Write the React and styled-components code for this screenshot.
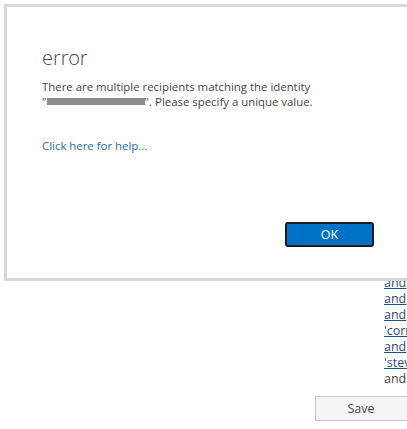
import React from 'react'
import styled, { createGlobalStyle } from 'styled-components'

const GlobalStyle = createGlobalStyle`
  html, body {
    margin: 0;
    padding: 0;
    background: #ffffff;
  }
  body {
    font-family: "Open Sans", "Noto Sans", "Liberation Sans", sans-serif;
  }
`

const Page = styled.div`
  position: relative;
  width: 407px;
  height: 429px;
  overflow: hidden;
  background: #ffffff;
`

const Behind = styled.div`
  display: flex;
  flex-direction: column;
  align-items: flex-start;
  padding: 275px 0 0 315px;
`

const LinkList = styled.ul`
  list-style: none;
  margin: 0 0 0 69px;
  padding: 0;
  font-size: 12.5px;
  line-height: 16px;
  white-space: nowrap;
`

const LinkItem = styled.li`
  color: ${(p) => (p.$plain ? '#444444' : '#1f4f7f')};
  text-decoration: ${(p) => (p.$plain ? 'none' : 'underline')};
`

const SaveButton = styled.button`
  margin-top: 9px;
  width: 102px;
  height: 25px;
  border: 1px solid #c8c8c8;
  background: #f4f4f4;
  color: #444444;
  font-family: inherit;
  font-size: 12.5px;
  padding: 0 10px 0 0;
`

const Dialog = styled.div`
  position: absolute;
  top: 4px;
  left: 4px;
  width: 430px;
  height: 277px;
  border: 3px solid #d8d8d8;
  background: #ffffff;
  display: flex;
  flex-direction: column;
  align-items: flex-start;
  padding: 38px 0 0 35px;
  box-sizing: border-box;
`

const Title = styled.h1`
  margin: 0;
  font-family: "Open Sans Light", "Lato Light", "Open Sans", sans-serif;
  font-size: 20px;
  font-weight: 300;
  line-height: 26px;
  color: #484848;
`

const Message = styled.p`
  margin: 8px 0 0;
  font-size: 11.4px;
  line-height: 15px;
  color: #444444;
`

const Redacted = styled.span`
  display: inline-block;
  width: 98px;
  height: 7px;
  background: #8c8c8c;
  vertical-align: 1px;
`

const HelpLink = styled.a`
  margin-top: 29px;
  font-size: 11.4px;
  line-height: 15px;
  color: #2a6bb0;
  text-decoration: none;
`

const Footer = styled.div`
  display: flex;
  margin-top: 69px;
  padding-left: 243px;
`

const OkButton = styled.button`
  width: 89px;
  height: 25px;
  border: 2px solid #1b1b1b;
  border-radius: 3px;
  background: #0072c6;
  color: #ffffff;
  font-family: inherit;
  font-size: 12.5px;
  padding: 0;
`

const links = ['and', 'and', 'and', "'corr", 'and', "'stev"]

export default function App() {
  return (
    <Page>
      <GlobalStyle />
      <Behind>
        <LinkList>
          {links.map((t, i) => (
            <LinkItem key={i}>{t}</LinkItem>
          ))}
          <LinkItem $plain>and</LinkItem>
        </LinkList>
        <SaveButton>Save</SaveButton>
      </Behind>
      <Dialog>
        <Title>error</Title>
        <Message>
          There are multiple recipients matching the identity
          <br />"<Redacted />". Please specify a unique value.
        </Message>
        <HelpLink href="#">Click here for help...</HelpLink>
        <Footer>
          <OkButton>OK</OkButton>
        </Footer>
      </Dialog>
    </Page>
  )
}
